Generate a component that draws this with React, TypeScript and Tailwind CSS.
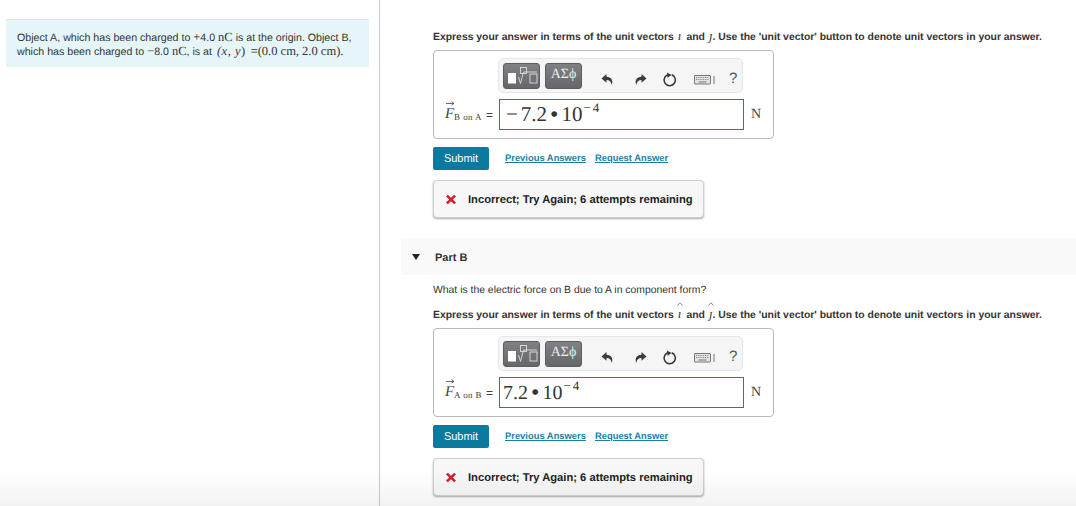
import type { ReactNode } from "react";

const SANS = "font-['Liberation_Sans',Arial,sans-serif]";
const SERIF = "font-['Liberation_Serif','Times_New_Roman',serif]";

function M({ children, className = "" }: { children: ReactNode; className?: string }) {
  return <span className={`${SERIF} text-[12.500px] ${className}`}>{children}</span>;
}

function Toolbar() {
  return (
    <div className="ml-[64px] flex h-[35px] w-[245px] items-center rounded-[5px] border border-[#e6e6e6] bg-[#f5f5f5] pl-[4px]">
      <div className="h-[26px] w-[37px] rounded-[3px] border border-[#5c5d60] bg-gradient-to-b from-[#808185] to-[#66676b]">
        <svg width="35" height="24" viewBox="0 0 35 24" fill="none">
          <rect x="4" y="9" width="8" height="10.500" fill="#fff" />
          <rect x="16.500" y="3.500" width="6" height="6" stroke="#ddd" strokeWidth="0.9" />
          <path d="M14.500 13l2 6.500 3-11.500h13.500" stroke="#ddd" strokeWidth="0.9" />
          <rect x="26" y="10" width="7" height="9" stroke="#ddd" strokeWidth="0.9" />
        </svg>
      </div>
      <div className={`${SERIF} ml-[5px] flex h-[26px] w-[37px] items-center justify-center rounded-[3px] border border-[#5c5d60] bg-gradient-to-b from-[#808185] to-[#66676b] pb-[3px] text-[14px] text-[#eee]`}>
        ΑΣϕ
      </div>
      <svg className="ml-[19px] mt-[8px]" width="13" height="13" viewBox="0 0 13 13">
        <path d="M5.500 1 .5 5.500l5 4.300V7c3 0 4.600 1.400 5.300 5 1.600-4.600-.3-8-5.300-8.200z" fill="#3c3c3c" />
      </svg>
      <svg className="ml-[20px] mt-[8px]" width="13" height="13" viewBox="0 0 13 13">
        <path d="M7.500 1l5 4.500-5 4.300V7c-3 0-4.600 1.400-5.300 5C.6 7.400 2.500 4 7.500 3.800z" fill="#3c3c3c" />
      </svg>
      <svg className="ml-[16px] mt-[8px]" width="14" height="15" viewBox="0 0 14 15" fill="none">
        <path d="M8.700 2.800A5.600 5.600 0 1 1 4.300 3" stroke="#333" strokeWidth="1.500" />
        <path d="M4 .5 8.500 2.900 4.500 5.700z" fill="#333" />
      </svg>
      <svg className="ml-[17px] mt-[8px]" width="22" height="10" viewBox="0 0 22 10" fill="none">
        <rect x=".5" y=".5" width="16" height="8.500" rx=".5" fill="#e4e4e4" stroke="#777" />
        <path d="M2 2.500h13M2 4.500h13" stroke="#888" strokeDasharray="1 .8" />
        <path d="M4.500 7h8" stroke="#777" />
        <path d="M20 1v8" stroke="#777" />
      </svg>
      <span className={`${SANS} ml-[13px] mt-[8px] text-[15px] text-[#555]`}>?</span>
    </div>
  );
}

function AnswerBox({ from, to, sign, size }: { from: string; to: string; sign: boolean; size: string }) {
  return (
    <div className="mt-[8px] h-[89px] w-[341px] rounded-[4px] border border-[#b9b9b9] pt-[7px]">
      <Toolbar />
      <div className="mt-[6px] flex items-center">
        <div className={`${SERIF} flex w-[65px] items-center justify-end pr-[6px] text-[#444]`}>
          <span className="relative text-[15px] italic">
            F
            <svg className="absolute -top-[3px] left-[1px]" width="9" height="6" viewBox="0 0 9 6" fill="none">
              <path d="M0 3.500h8M5.500 1.500l2.500 2-2.500 1.500" stroke="#444" strokeWidth=".8" />
            </svg>
          </span>
          <span className="mt-[6px] whitespace-nowrap text-[9px] tracking-[0.4px]">{`${from} on ${to}`}</span>
          <span className={`${SANS} ml-[4px] text-[12px]`}>=</span>
        </div>
        <div className={`${SERIF} flex h-[31px] w-[245px] items-center whitespace-nowrap border border-[#2e7a93] pl-[3px] text-[#333] ${size}`}>
          {sign && <span className="ml-[3px] mr-[3px]">−</span>}
          <span>7.2</span>
          <span className="mx-[3px] text-[24px]">•</span>
          <span>10</span>
          <span className="mb-[14px] ml-[1px] text-[13px]">−</span>
          <span className="mb-[14px] ml-[2px] text-[13px]">4</span>
        </div>
        <span className={`${SERIF} ml-[7px] text-[14px] text-[#444]`}>N</span>
      </div>
    </div>
  );
}

function Actions() {
  return (
    <div className="flex items-center whitespace-nowrap">
      <button className={`${SANS} h-[23px] w-[56px] rounded-[2px] bg-[#0b7a9f] text-[11px] text-white`}>
        Submit
      </button>
      <a className={`${SANS} ml-[16px] text-[9.400px] font-bold text-[#1e7fa3] underline`}>Previous Answers</a>
      <a className={`${SANS} ml-[9px] text-[9.400px] font-bold text-[#1e7fa3] underline`}>Request Answer</a>
    </div>
  );
}

function Feedback() {
  return (
    <div className="flex h-[38px] w-[271px] items-center whitespace-nowrap rounded-[4px] border border-[#cfcfcf] bg-[#f7f7f7] pl-[11px] pt-[2px] shadow-[0_1px_2px_rgba(0,0,0,0.35)]">
      <svg className="mb-[2px] shrink-0" width="12" height="11" viewBox="0 0 12 11">
        <path d="M1 2.500 2.800 .7 6 3.800 9.200 .7 11 2.500 7.800 5.500 11 8.500 9.200 10.300 6 7.200 2.800 10.300 1 8.500 4.200 5.500z" fill="#d21f2d" />
      </svg>
      <span className={`${SANS} ml-[11px] text-[11.200px] font-bold text-[#222]`}>
        Incorrect; Try Again; 6 attempts remaining
      </span>
    </div>
  );
}

function Hat() {
  return (
    <svg className="absolute -top-[4px] -left-[1px]" width="6" height="4" viewBox="0 0 6 4" fill="none">
      <path d="M.5 3.500 3 .8l2.500 2.700" stroke="#555" strokeWidth=".7" />
    </svg>
  );
}

function Instruction({ hat }: { hat: boolean }) {
  return (
    <p className={`${SANS} h-[13px] whitespace-nowrap text-[10.400px] font-bold leading-[12px] text-[#333]`}>
      Express your answer in terms of the unit vectors
      <span className={`${SERIF} relative ml-[4px] text-[13px] font-normal italic leading-none`}>
        {hat && <Hat />}ı
      </span>
      <span className="ml-[5px]">and</span>
      <span className={`${SERIF} relative ml-[4px] text-[13px] font-normal italic leading-none`}>
        {hat && <Hat />}ȷ
      </span>
      . Use the 'unit vector' button to denote unit vectors in your answer.
    </p>
  );
}

export default function App() {
  return (
    <div className={`${SANS} relative flex h-[506px] w-[1076px] overflow-hidden bg-white [text-rendering:geometricPrecision]`}>
      <div className="h-full w-[380px] shrink-0 border-r border-[#c5cbd3] pl-[6px] pt-[19px]">
        <div className="h-[48px] w-[363px] whitespace-nowrap border-t border-[#dfe7e8] bg-[#e6f6f8] pl-[11px] pt-[11px] text-[10.650px] leading-[12.500px] text-[#333]">
          <p>
            Object A, which has been charged to <M>+</M>4.0 <M>nC</M> is at the origin. Object B,
          </p>
          <p>
            which has been charged to <M>−</M>8.0 <M>nC</M>, is at{" "}
            <M className="ml-[2px] tracking-[0.5px]"><i>(x</i>, <i>y</i>)</M> <M className="ml-[2px]">=</M>
            <M>(0.0 cm, 2.0 cm).</M>
          </p>
        </div>
      </div>

      <div className="flex-1 pt-[29px]">
        <div className="pl-[53px]">
          <Instruction hat={false} />
          <AnswerBox from="B" to="A" sign size="text-[21px]" />
          <div className="mt-[8px]"><Actions /></div>
          <div className="mt-[10px]"><Feedback /></div>
        </div>

        <div className="ml-[21px] mt-[20px] flex h-[37px] items-center bg-[#f9f9f9] pl-[11px]">
          <span className="h-0 w-0 border-x-[4.500px] border-t-[6px] border-x-transparent border-t-[#222]" />
          <span className="ml-[15px] pt-[3px] text-[11px] font-bold text-[#333]">Part B</span>
        </div>

        <div className="pl-[53px]">
          <p className="mt-[9px] h-[13px] text-[10.400px] leading-[14px] text-[#333]">
            What is the electric force on B due to A in component form?
          </p>
          <div className="mt-[10px]"><Instruction hat /></div>
          <AnswerBox from="A" to="B" sign={false} size="text-[20px]" />
          <div className="mt-[8px]"><Actions /></div>
          <div className="mt-[10px]"><Feedback /></div>
        </div>
      </div>

      <div className="pointer-events-none absolute inset-x-0 bottom-0 h-[36px] bg-gradient-to-b from-transparent to-black/5" />
    </div>
  );
}
